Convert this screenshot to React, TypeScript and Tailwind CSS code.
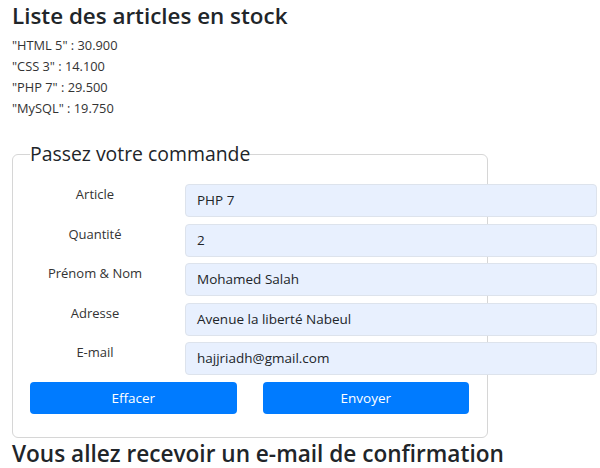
import React from "react";

const rows: [string, string][] = [
  ["Article", "PHP 7"],
  ["Quantité", "2"],
  ["Prénom & Nom", "Mohamed Salah"],
  ["Adresse", "Avenue la liberté Nabeul"],
  ["E-mail", "hajjriadh@gmail.com"],
];

export default function App() {
  return (
    <div
      className="w-[600px] h-[468px] overflow-hidden bg-white px-3 text-[#212529]"
      style={{ fontFamily: '"Open Sans", "Noto Sans", sans-serif' }}
    >
      <h3 className="pt-[1px] text-[22.4px] leading-[30px] font-semibold">Liste des articles en stock</h3>
      <div className="mt-[4px] text-[12.8px] leading-[21px] text-[#333]">
        <div>"HTML 5" : 30.900</div>
        <div>"CSS 3" : 14.100</div>
        <div>"PHP 7" : 29.500</div>
        <div>"MySQL" : 19.750</div>
      </div>
      <fieldset className="mt-[21px] w-[476px] min-w-0 rounded-md border border-[#d6d6d6] pl-[17px] pr-[18px] pb-[23px]">
        <legend className="text-[19.4px] leading-[28px] text-[#212529]">Passez votre commande</legend>
        <div className="mt-[16px] flex flex-col gap-[6.5px]">
          {rows.map(([label, value]) => (
            <div key={label} className="flex items-start">
              <div className="w-[130px] shrink-0 text-center text-[13px] leading-[20px] text-[#333]">{label}</div>
              <div className="ml-[25px] flex h-[33px] w-[412px] shrink-0 items-center rounded-[4px] border border-[#dde3ec] bg-[#e8f0fe] px-[11px] text-[13.5px] text-[#212529]">
                {value}
              </div>
            </div>
          ))}
        </div>
        <div className="mt-[7px] grid grid-cols-2 gap-[26px]">
          <button className="h-[32px] rounded-[4px] bg-[#007bff] text-[13.5px] text-white">Effacer</button>
          <button className="h-[32px] rounded-[4px] bg-[#007bff] text-[13.5px] text-white">Envoyer</button>
        </div>
      </fieldset>
      <h3 className="mt-[1px] whitespace-nowrap text-[22.6px] leading-[30px] font-semibold">Vous allez recevoir un e-mail de confirmation</h3>
    </div>
  );
}
